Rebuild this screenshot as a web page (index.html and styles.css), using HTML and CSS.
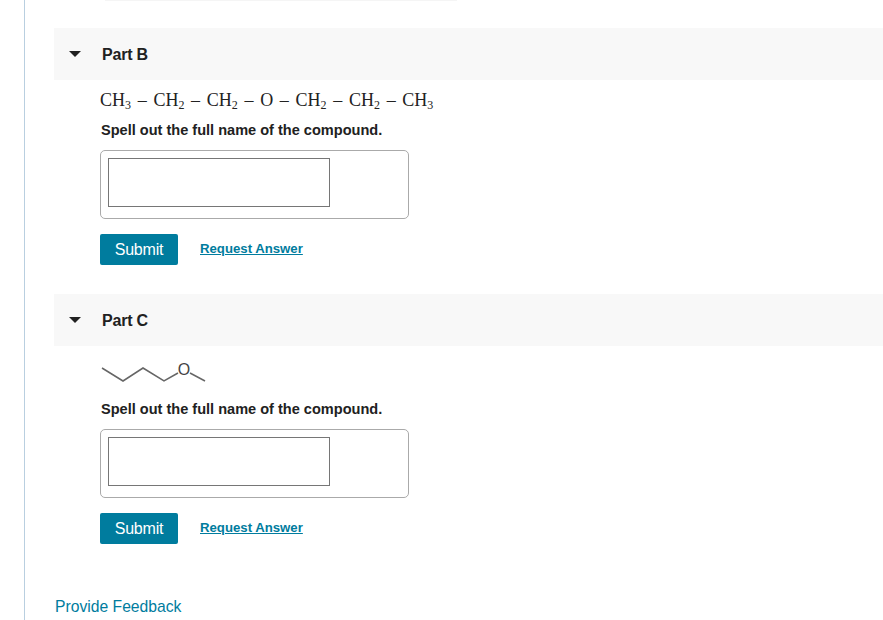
FILE: index.html
```html
<!DOCTYPE html>
<html lang="en">
<head>
    <meta charset="UTF-8">
    <meta name="viewport" content="width=device-width, initial-scale=1.0">
    <title>Parts B and C</title>
    <link rel="stylesheet" href="styles.css">
</head>
<body>
    <div class="page">
        <div class="top-edge"></div>
        <section class="part">
            <header class="part-header">
                <span class="arrow"></span>
                <h2>Part B</h2>
            </header>
            <div class="part-body">
                <p class="formula">CH<sub>3</sub> <i>&ndash;</i> CH<sub>2</sub> <i>&ndash;</i> CH<sub>2</sub> <i>&ndash;</i> O <i>&ndash;</i> CH<sub>2</sub> <i>&ndash;</i> CH<sub>2</sub> <i>&ndash;</i> CH<sub>3</sub></p>
                <p class="prompt">Spell out the full name of the compound.</p>
                <div class="answer-box"><input type="text" class="answer"></div>
                <div class="actions">
                    <button type="button" class="button">Submit</button>
                    <a href="#" class="request">Request Answer</a>
                </div>
            </div>
        </section>
        <section class="part part-c">
            <header class="part-header">
                <span class="arrow"></span>
                <h2>Part C</h2>
            </header>
            <div class="part-body">
                <div class="structure">
                    <svg width="106" height="26" viewBox="0 0 106 26">
                        <polyline points="2,11 23,24 43,11 64,24 78,16" fill="none" stroke="#666" stroke-width="1.5"/>
                        <polyline points="90,16 105,24" fill="none" stroke="#666" stroke-width="1.5"/>
                        <text x="84" y="18" class="atom">O</text>
                    </svg>
                </div>
                <p class="prompt">Spell out the full name of the compound.</p>
                <div class="answer-box"><input type="text" class="answer"></div>
                <div class="actions">
                    <button type="button" class="button">Submit</button>
                    <a href="#" class="request">Request Answer</a>
                </div>
            </div>
        </section>
        <a href="#" class="feedback">Provide Feedback</a>
    </div>
</body>
</html>
```

FILE: styles.css
```css
body {
    font-family: "Liberation Sans", Arial, sans-serif;
    background-color: white;
    color: #212121;
    margin: 0;
    padding: 0;
}
.page {
    box-sizing: border-box;
    height: 620px;
    margin-left: 24px;
    padding-left: 29px;
    border-left: 1px solid #b9cfe0;
    overflow: hidden;
}
.top-edge {
    width: 352px;
    height: 1px;
    margin-left: 51px;
    margin-bottom: 27px;
    background-color: #f5f5f5;
}
.part-header {
    display: flex;
    align-items: center;
    height: 52px;
    background-color: #f8f8f8;
}
.part-header h2 {
    margin: 2px 0 0;
    font-size: 16px;
    font-weight: bold;
    letter-spacing: -0.2px;
}
.arrow {
    width: 0;
    height: 0;
    margin-left: 15px;
    margin-right: 21px;
    border-left: 6px solid transparent;
    border-right: 6px solid transparent;
    border-top: 6px solid #212121;
}
.part-body {
    padding-left: 46px;
}
.formula {
    margin: 10px 0 0;
    height: 20px;
    font-family: "Liberation Serif", "Times New Roman", serif;
    font-size: 18px;
    line-height: 20px;
    white-space: nowrap;
    color: #222;
}
.formula sub {
    font-size: 12px;
    line-height: 0;
    vertical-align: -3px;
}
.formula i {
    font-style: normal;
    margin: 0 2.2px;
}
.prompt {
    margin: 11px 0 0;
    padding-left: 1px;
    font-size: 14.55px;
    font-weight: bold;
    line-height: 18px;
}
.answer-box {
    box-sizing: border-box;
    width: 309px;
    height: 69px;
    margin-top: 11px;
    padding: 7px;
    border: 1px solid #aaa;
    border-radius: 5px;
}
.answer {
    display: block;
    box-sizing: border-box;
    width: 222px;
    height: 49px;
    margin: 0;
    border: 1px solid #767676;
    background-color: white;
}
.actions {
    display: flex;
    align-items: center;
    margin-top: 15px;
}
.button {
    width: 78px;
    height: 31px;
    padding: 0;
    background-color: #007c9e;
    color: white;
    border: none;
    border-radius: 2px;
    font-family: inherit;
    font-size: 16px;
    letter-spacing: -0.2px;
    cursor: pointer;
}
.request {
    margin-left: 22px;
    margin-bottom: 3px;
    color: #007c9e;
    font-size: 13.2px;
    font-weight: bold;
}
.part-c {
    margin-top: 29px;
}
.structure {
    height: 26px;
    margin-top: 11px;
}
.structure svg {
    display: block;
}
.atom {
    font-family: "Liberation Sans", Arial, sans-serif;
    font-size: 16px;
    fill: #444;
    text-anchor: middle;
}
.part-c .prompt {
    margin-top: 17px;
}
.feedback {
    display: block;
    margin-top: 53px;
    margin-left: 1px;
    color: #007c9e;
    font-size: 15.7px;
    line-height: 20px;
    text-decoration: none;
}
```
